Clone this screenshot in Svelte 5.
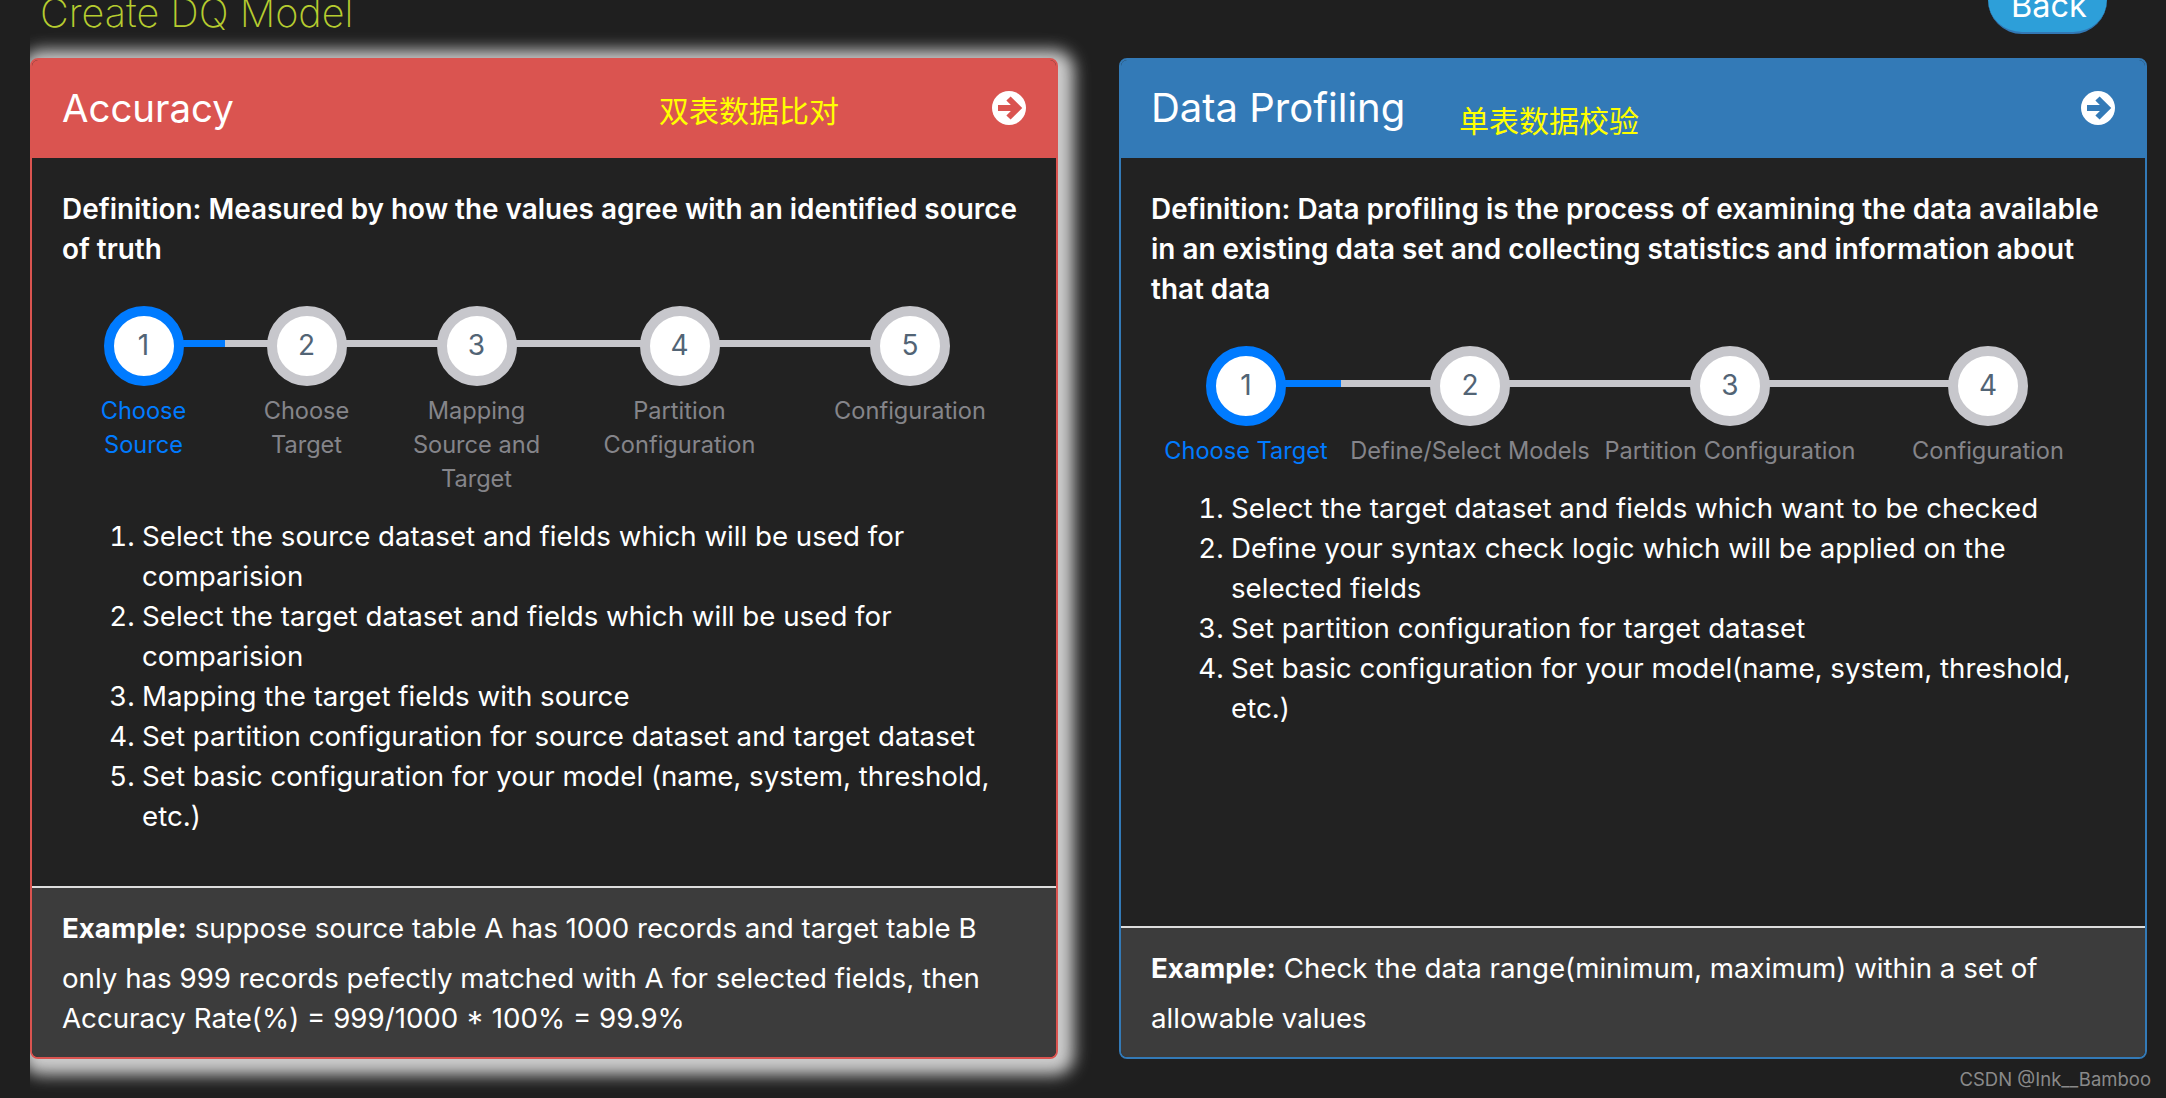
<script lang="ts">
  // two model-type cards on the "Create DQ Model" page
  const cards = [
    {
      kind: 'accuracy',
      title: 'Accuracy',
      note: '双表数据比对',
      definition: 'Definition: Measured by how the values agree with an identified source of truth',
      columns: [163, 163, 177, 229, 232],
      steps: ['Choose Source', 'Choose Target', 'Mapping Source and Target', 'Partition Configuration', 'Configuration'],
      items: [
        'Select the source dataset and fields which will be used for comparision',
        'Select the target dataset and fields which will be used for comparision',
        'Mapping the target fields with source',
        'Set partition configuration for source dataset and target dataset',
        'Set basic configuration for your model (name, system, threshold, etc.)'
      ],
      example: 'suppose source table A has 1000 records and target table B only has 999 records pefectly matched with A for selected fields, then Accuracy Rate(%) = 999/1000 * 100% = 99.9%'
    },
    {
      kind: 'profiling',
      title: 'Data Profiling',
      note: '单表数据校验',
      definition: 'Definition: Data profiling is the process of examining the data available in an existing data set and collecting statistics and information about that data',
      columns: [190, 258, 262, 254],
      steps: ['Choose Target', 'Define/Select Models', 'Partition Configuration', 'Configuration'],
      items: [
        'Select the target dataset and fields which want to be checked',
        'Define your syntax check logic which will be applied on the selected fields',
        'Set partition configuration for target dataset',
        'Set basic configuration for your model(name, system, threshold, etc.)'
      ],
      example: 'Check the data range(minimum, maximum) within a set of allowable values'
    }
  ];
</script>

<div class="page">
  <header class="top">
    <h1>Create DQ Model</h1>
    <button type="button" class="back">Back</button>
  </header>

  <main class="cards">
    {#each cards as card (card.kind)}
      <section class="card {card.kind}">
        <div class="card-head">
          <h2>{card.title}</h2>
          <svg class="go" viewBox="0 0 34 34" aria-hidden="true">
            <circle cx="17" cy="17" r="17" fill="#fff" />
            <path d="M6 17H27M16.500 7.500 26 17l-9.500 9.500" fill="none" stroke="currentColor" stroke-width="6" />
          </svg>
          <span class="note">{card.note}</span>
        </div>

        <div class="card-body">
          <p class="definition">{card.definition}</p>

          <div class="steps" style="grid-template-columns: {card.columns.map((c) => c + 'px').join(' ')}">
            {#each card.steps as step, i}
              <div class="step" class:active={i === 0}>
                <div class="track">
                  <span class="seg" class:hidden={i === 0}></span>
                  <span class="seg right" class:hidden={i === card.steps.length - 1}></span>
                  <span class="dot">{i + 1}</span>
                </div>
                <div class="label">{step}</div>
              </div>
            {/each}
          </div>

          <ol>
            {#each card.items as item}
              <li>{item}</li>
            {/each}
          </ol>
        </div>

        <div class="card-foot">
          <strong>Example:</strong> {card.example}
        </div>
      </section>
    {/each}
  </main>

  <div class="mark">CSDN @Ink__Bamboo</div>
</div>

<style>
  :global(body) {
    background: #1f1f1f;
    overflow: hidden;
  }

  .page {
    position: relative;
    height: 1098px;
    overflow: hidden;
    font-family: Inter, 'Liberation Sans', 'Noto Sans CJK SC', sans-serif;
    font-size: 27.7px;
    line-height: 40px;
    color: #fff;
  }

  .top {
    display: flex;
    justify-content: space-between;
    align-items: flex-start;
    height: 58px;
    padding: 0 59px 0 40px;
  }

  h1 {
    margin: -16px 0 0;
    font-size: 39.6px;
    font-weight: 200;
    line-height: 58px;
    color: #b6cc2f;
  }

  .back {
    margin-top: -20px;
    width: 119px;
    height: 54px;
    padding: 0 0 0 3px;
    border: 0;
    border-bottom: 2px solid #3278b5;
    border-radius: 0 0 34px 34px;
    background: #2d9fd9;
    color: #fff;
    font: 32.5px/50px Inter, 'Liberation Sans', sans-serif;
  }

  .cards {
    display: grid;
    grid-template-columns: 1028px 1028px;
    gap: 61px;
    padding-left: 30px;
  }

  .card {
    position: relative;
    display: flex;
    flex-direction: column;
    border: 2px solid var(--tone);
    border-radius: 8px;
    background: #222;
    color: #fff;
  }

  .accuracy {
    --tone: #da5450;
    box-shadow: 4px 4px 16px 12px #ccc;
    clip-path: inset(-40px -40px -40px 0);
  }

  .profiling {
    --tone: #337ab7;
  }

  .card-head {
    position: relative;
    display: flex;
    justify-content: space-between;
    align-items: center;
    height: 98px;
    padding: 0 30px 2px 30px;
    box-sizing: border-box;
    background: var(--tone);
    border-radius: 6px 6px 0 0;
    color: var(--tone);
  }

  h2 {
    margin: 0;
    font-size: 38.4px;
    font-weight: 400;
    line-height: 44px;
    color: #fff;
  }

  .profiling h2 {
    font-size: 40px;
  }

  .go {
    width: 34px;
    height: 34px;
  }

  /* yellow hand annotations sitting on the header */
  .note {
    position: absolute;
    font-family: 'Noto Sans CJK SC', sans-serif;
    font-size: 30px;
    line-height: 36px;
    color: #ff0;
  }

  .accuracy .note {
    left: 627px;
    top: 31px;
  }

  .profiling .note {
    left: 338px;
    top: 41px;
  }

  .card-body {
    padding: 31px 30px 50px 30px;
  }

  .definition {
    margin: 0 0 37px;
    font-size: 27.9px;
    font-weight: 600;
  }

  .steps {
    display: grid;
  }

  .step {
    text-align: center;
  }

  .track {
    position: relative;
    display: flex;
    justify-content: center;
    height: 80px;
    margin-bottom: 8px;
  }

  .seg {
    position: absolute;
    top: 34px;
    left: 0;
    width: 50%;
    height: 7px;
    background: #c7c7cc;
  }

  .seg.right {
    left: 50%;
  }

  .seg.hidden {
    display: none;
  }

  .active .seg.right {
    background: #007bff;
  }

  .dot {
    position: relative;
    box-sizing: border-box;
    width: 80px;
    height: 80px;
    border: 10px solid #c7c7cc;
    border-radius: 50%;
    background: #fff;
    color: #526475;
    font-size: 28px;
    line-height: 58px;
  }

  .active .dot {
    border-color: #007bff;
  }

  .label {
    padding: 0 2px;
    font-size: 23.6px;
    line-height: 34px;
    color: #85858a;
  }

  .active .label {
    color: #007bff;
  }

  ol {
    margin: 20px 0 0;
    padding: 0 0 0 80px;
  }

  .card-foot {
    margin-top: auto;
    padding: 10px 30px 19px;
    border-top: 2px solid #ddd;
    border-radius: 0 0 6px 6px;
    background: #3c3c3c;
  }

  .card-foot strong {
    line-height: 60px;
  }

  .mark {
    position: absolute;
    right: 15px;
    bottom: 6px;
    font-size: 18.5px;
    line-height: 26px;
    color: #8a8a8a;
  }
</style>
